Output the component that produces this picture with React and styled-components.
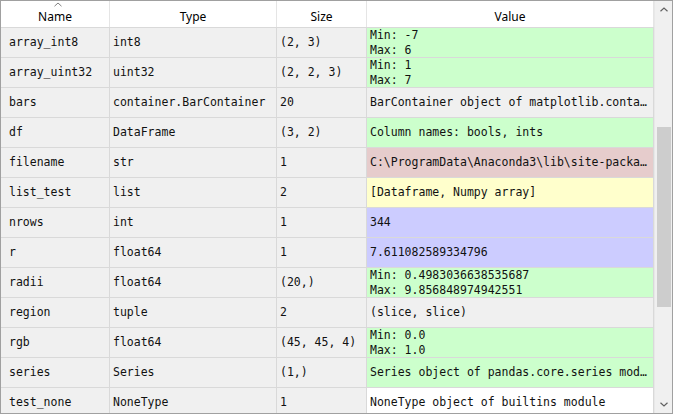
import React from 'react';
import styled, { createGlobalStyle } from 'styled-components';

/*-------------------- Styled Components --------------------*/

const GlobalStyle = createGlobalStyle`
  html, body {
    margin: 0;
    padding: 0;
    background: #ffffff;
  }
`;

const COLUMNS = '109px 167px 90px 1fr';

const VALUE_COLORS = {
  green: '#ccffcc',
  pink: '#e6cccc',
  yellow: '#ffffcc',
  blue: '#ccccff',
  gray: '#f0f0f0',
  white: '#ffffff',
};

// outer frame of the variable explorer
const Frame = styled.div`
  width: 673px;
  height: 414px;
  box-sizing: border-box;
  border: 1px solid #a0a0a0;
  display: flex;
  overflow: hidden;
  background: #ffffff;
`;

const TableArea = styled.div`
  flex: 1;
  min-width: 0;
  overflow: hidden;
`;

const HeaderRow = styled.div`
  display: grid;
  grid-template-columns: ${COLUMNS};
  height: 26px;
  background: #ffffff;
`;

const HeaderCell = styled.div`
  position: relative;
  box-sizing: border-box;
  border-right: 1px solid #e5e5e5;
  display: flex;
  align-items: center;
  justify-content: center;
  padding-top: 4px;
  font-family: "Noto Sans", "Open Sans", sans-serif;
  font-size: 12px;
  color: #000000;
`;

// little sort arrow above the 'Name' title
const SortMark = styled.svg`
  position: absolute;
  top: 1px;
  left: 50%;
  margin-left: -1px;
`;

const Row = styled.div`
  display: grid;
  grid-template-columns: ${COLUMNS};
  height: 30px;
`;

const Cell = styled.div`
  box-sizing: border-box;
  border-right: 1px solid #d9d9d9;
  border-top: 1px solid #d9d9d9;
  background: ${(p) => VALUE_COLORS[p.$color] || '#f0f0f0'};
  padding-left: ${(p) => (p.$first ? '8px' : '3px')};
  display: flex;
  flex-direction: column;
  justify-content: center;
  overflow: hidden;
  white-space: nowrap;
  font-family: "DejaVu Sans Mono", "Liberation Mono", monospace;
  font-size: 11.5px;
  line-height: 15px;
  color: #111111;
`;

const ScrollBar = styled.div`
  width: 17px;
  flex: none;
  background: #f0f0f0;
  border-left: 1px solid #e8e8e8;
  display: flex;
  flex-direction: column;
  align-items: center;
`;

const ArrowButton = styled.div`
  height: 17px;
  width: 100%;
  display: flex;
  align-items: center;
  justify-content: center;
`;

const Track = styled.div`
  flex: 1;
  width: 100%;
  display: flex;
  flex-direction: column;
  align-items: center;
  padding-top: 109px;
  box-sizing: border-box;
`;

const Thumb = styled.div`
  width: 14px;
  height: 180px;
  background: #cdcdcd;
`;

/*-------------------- Data --------------------*/

const variables = [
  { name: 'array_int8', type: 'int8', size: '(2, 3)', value: ['Min: -7', 'Max: 6'], color: 'green' },
  { name: 'array_uint32', type: 'uint32', size: '(2, 2, 3)', value: ['Min: 1', 'Max: 7'], color: 'green' },
  { name: 'bars', type: 'container.BarContainer', size: '20', value: ['BarContainer object of matplotlib.conta…'], color: 'gray' },
  { name: 'df', type: 'DataFrame', size: '(3, 2)', value: ['Column names: bools, ints'], color: 'green' },
  { name: 'filename', type: 'str', size: '1', value: ['C:\\ProgramData\\Anaconda3\\lib\\site-packa…'], color: 'pink' },
  { name: 'list_test', type: 'list', size: '2', value: ['[Dataframe, Numpy array]'], color: 'yellow' },
  { name: 'nrows', type: 'int', size: '1', value: ['344'], color: 'blue' },
  { name: 'r', type: 'float64', size: '1', value: ['7.611082589334796'], color: 'blue' },
  { name: 'radii', type: 'float64', size: '(20,)', value: ['Min: 0.4983036638535687', 'Max: 9.856848974942551'], color: 'green' },
  { name: 'region', type: 'tuple', size: '2', value: ['(slice, slice)'], color: 'gray' },
  { name: 'rgb', type: 'float64', size: '(45, 45, 4)', value: ['Min: 0.0', 'Max: 1.0'], color: 'green' },
  { name: 'series', type: 'Series', size: '(1,)', value: ['Series object of pandas.core.series mod…'], color: 'green' },
  { name: 'test_none', type: 'NoneType', size: '1', value: ['NoneType object of builtins module'], color: 'white' },
];

/*-------------------- Functional Component --------------------*/

function Chevron({ down }) {
  return (
    <svg width="8" height="5" viewBox="0 0 8 5">
      <path
        d={down ? 'M0.5 0.8 L4 4 L7.5 0.8' : 'M0.5 4.2 L4 1 L7.5 4.2'}
        fill="none"
        stroke="#606060"
        strokeWidth="1.2"
      />
    </svg>
  );
}

export default function App() {
  return (
    <>
      <GlobalStyle />
      <Frame>
        <TableArea>
          <HeaderRow>
            <HeaderCell>
              <SortMark width="8" height="5" viewBox="0 0 8 5">
                <path d="M0.5 4.2 L4 1 L7.5 4.2" fill="none" stroke="#808080" strokeWidth="1" />
              </SortMark>
              Name
            </HeaderCell>
            <HeaderCell>Type</HeaderCell>
            <HeaderCell>Size</HeaderCell>
            <HeaderCell>Value</HeaderCell>
          </HeaderRow>
          {variables.map((v) => (
            <Row key={v.name}>
              <Cell $first>{v.name}</Cell>
              <Cell>{v.type}</Cell>
              <Cell>{v.size}</Cell>
              <Cell $color={v.color}>
                {v.value.map((line) => (
                  <span key={line}>{line}</span>
                ))}
              </Cell>
            </Row>
          ))}
        </TableArea>
        <ScrollBar>
          <ArrowButton>
            <Chevron />
          </ArrowButton>
          <Track>
            <Thumb />
          </Track>
          <ArrowButton>
            <Chevron down />
          </ArrowButton>
        </ScrollBar>
      </Frame>
    </>
  );
}
